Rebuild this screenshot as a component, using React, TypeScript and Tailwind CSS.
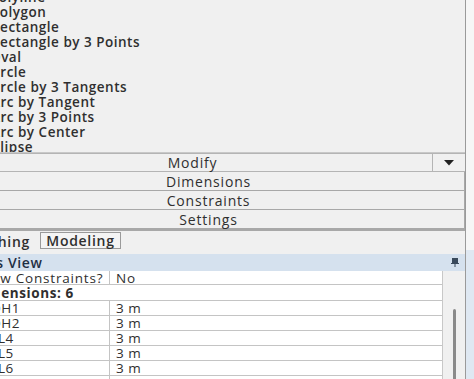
// 左のリスト項目
const tools = [
  { name: 'Polyline', cut: 'ml-[-10px]' },
  { name: 'Polygon', cut: 'ml-[-9px]' },
  { name: 'Rectangle', cut: 'ml-[-9px]' },
  { name: 'Rectangle by 3 Points', cut: 'ml-[-9px]' },
  { name: 'Oval', cut: 'ml-[-10px]' },
  { name: 'Circle', cut: 'ml-[-13px]' },
  { name: 'Circle by 3 Tangents', cut: 'ml-[-13px]' },
  { name: 'Arc by Tangent', cut: 'ml-[-9px]' },
  { name: 'Arc by 3 Points', cut: 'ml-[-9px]' },
  { name: 'Arc by Center', cut: 'ml-[-9px]' },
  { name: 'Ellipse', cut: 'ml-[-12px]' },
];

const dims = [
  { name: 'DH1', cut: 'ml-[-11px]' },
  { name: 'DH2', cut: 'ml-[-11px]' },
  { name: 'L4', cut: 'ml-[-4px]' },
  { name: 'L5', cut: 'ml-[-4px]' },
  { name: 'L6', cut: 'ml-[-4px]' },
  { name: 'L7', cut: 'ml-[-4px]' },
];

const sections = ['Dimensions', 'Constraints', 'Settings'];

export default function App() {
  return (
    <div className="w-[474px] h-[379px] overflow-hidden flex bg-[#f0f0f0] text-[#2f2f2f] font-['Open_Sans',sans-serif]">
      <div className="w-[466px] shrink-0 flex flex-col border-r border-[#9a9a9a]">
        {/* ツール一覧 */}
        <div className="h-[153px] shrink-0 overflow-hidden border-b border-[#c8c8c8] bg-[#f0f0f0]">
          <div className="mt-[-10px] flex flex-col">
            {tools.map((t) => (
              <div
                key={t.name}
                className={`h-[15px] leading-[15px] text-[13.5px] tracking-[0.5px] font-semibold whitespace-nowrap ${t.cut}`}
              >
                {t.name}
              </div>
            ))}
          </div>
        </div>

        {/* セクションボタン */}
        <div className="h-[79px] shrink-0 overflow-hidden">
          <div className="ml-[-48px] flex flex-col border-b-2 border-[#a8a8a8]">
            <div className="flex h-[19px]">
              <div className="flex-1 flex items-center justify-center border border-[#b4b4b4] bg-[#f0f0f0] text-[14px] tracking-[0.8px] font-medium">
                Modify
              </div>
              <div className="w-[32px] flex items-center justify-center border-y border-[#b4b4b4] bg-[#f0f0f0]">
                <svg width="10" height="6" viewBox="0 0 10 6">
                  <path d="M0 0 H10 L5 5.5 Z" fill="#222" />
                </svg>
              </div>
            </div>
            {sections.map((s) => (
              <div
                key={s}
                className="h-[19px] flex items-center justify-center border border-[#a8a8a8] border-t-0 text-[14px] tracking-[0.8px] font-medium bg-[#f0f0f0]"
              >
                {s}
              </div>
            ))}
          </div>
        </div>

        {/* タブ */}
        <div className="h-[18px] shrink-0 flex items-end">
          <div className="h-[17px] w-[40px] overflow-hidden flex items-end">
            <span className="ml-[-42px] text-[14px] tracking-[0.7px] font-semibold leading-[15px] pb-[1px] whitespace-nowrap">Sketching</span>
          </div>
          <div className="h-[17px] w-[81px] mb-[1px] flex items-center justify-center border border-[#9a9a9a] bg-[#f4f4f4] text-[14px] tracking-[0.7px] font-semibold">
            Modeling
          </div>
        </div>

        {/* プロパティ */}
        <div className="flex-1 flex flex-col pt-[4px]">
          <div className="h-[17px] shrink-0 flex items-center justify-between bg-[#d5e1ee] pr-[6px]">
            <span className="ml-[-37px] text-[14px] tracking-[0.6px] font-semibold text-[#1f2f44] whitespace-nowrap">Tasks View</span>
            <svg width="8" height="9" viewBox="0 0 8 9">
              <rect x="1" y="0" width="6" height="5" fill="#3a4a5c" />
              <rect x="0" y="5" width="8" height="1" fill="#3a4a5c" />
              <rect x="3.5" y="6" width="1" height="3" fill="#3a4a5c" />
            </svg>
          </div>
          <div className="flex flex-1">
            <div className="w-[443px] shrink-0 flex flex-col bg-white border-r border-[#c8c8c8]">
              <div className="h-[14px] flex border-b border-[#c4c4c4] text-[13.5px] tracking-[0.8px] leading-[14px] font-medium">
                <div className="w-[110px] overflow-hidden border-r border-[#c4c4c4] whitespace-nowrap">
                  <span className="ml-[-26px] inline-block">Show Constraints?</span>
                </div>
                <div className="pl-[6px]">No</div>
              </div>
              <div className="h-[16px] flex border-b border-[#c4c4c4] text-[13.5px] tracking-[0.6px] leading-[16px] font-bold whitespace-nowrap overflow-hidden">
                <span className="ml-[-28px]">Dimensions: 6</span>
              </div>
              {dims.map((d) => (
                <div key={d.name} className="h-[15px] flex border-b border-[#c4c4c4] text-[13.5px] tracking-[0.5px] leading-[15px] font-medium">
                  <div className="w-[110px] overflow-hidden border-r border-[#c4c4c4] whitespace-nowrap pl-[2px]">
                    <span className={`inline-block ${d.cut}`}>{d.name}</span>
                  </div>
                  <div className="pl-[6px]">3 m</div>
                </div>
              ))}
            </div>
            <div className="flex-1 flex justify-center pt-[38px]">
              <div className="w-[3px] h-full bg-[#8a8a8a] rounded-full" />
            </div>
          </div>
        </div>
      </div>
      <div className="flex-1 flex flex-col">
        <div className="h-[250px] bg-[#f6f6f6]" />
        <div className="flex-1 bg-[#dfe8f2]" />
      </div>
    </div>
  );
}
